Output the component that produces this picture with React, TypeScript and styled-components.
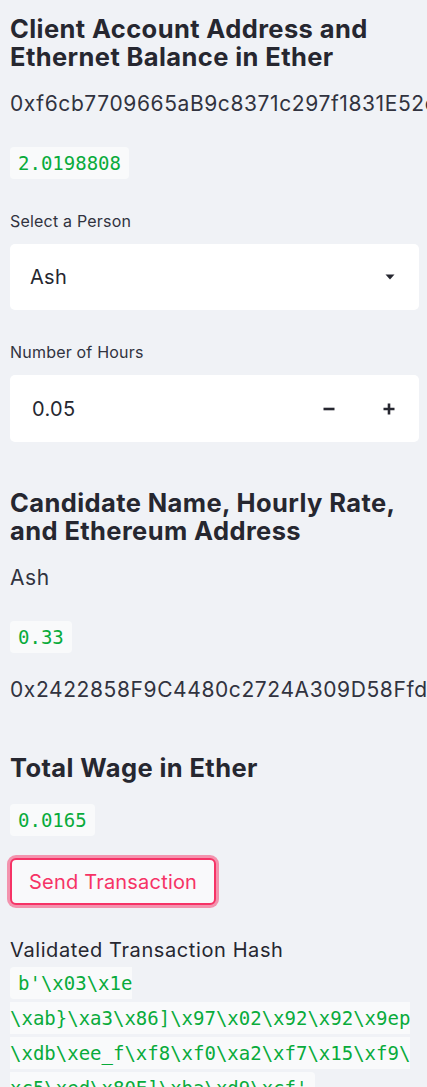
import React from 'react'
import styled, { createGlobalStyle } from 'styled-components'

const GlobalStyle = createGlobalStyle`
  html, body {
    margin: 0;
    padding: 0;
    background: #f0f2f6;
    overflow-x: hidden;
  }
  body {
    font-family: Inter, "Noto Sans", sans-serif;
    color: #262730;
  }
`

const hashLines = [
  "b'\\x03\\x1e",
  "\\xab}\\xa3\\x86]\\x97\\x02\\x92\\x92\\x9ep",
  "\\xdb\\xee_f\\xf8\\xf0\\xa2\\xf7\\x15\\xf9\\",
  "xc5\\xed\\x80E]\\xba\\xd9\\xcf'",
]

const App = () => {
  return (
    <>
      <GlobalStyle />
      <Main>
        <Heading top={15}>Client Account Address and Ethernet Balance in Ether</Heading>
        <Text top={18}>0xf6cb7709665aB9c8371c297f1831E52c44c0a5F1</Text>
        <CodeRow top={28}>
          <Code>2.0198808</Code>
        </CodeRow>

        <Label top={32}>Select a Person</Label>
        <SelectBox>
          <FieldValue>Ash</FieldValue>
          <svg width="10" height="6" viewBox="0 0 10 6">
            <path d="M0.5 0.5 L9.5 0.5 L5 5.5 Z" fill="#262730" />
          </svg>
        </SelectBox>

        <Label top={32}>Number of Hours</Label>
        <NumberBox>
          <FieldValue>0.05</FieldValue>
          <StepButton aria-label="decrement">
            <svg width="12" height="12" viewBox="0 0 12 12">
              <path d="M0.5 6 H11.5" stroke="#262730" strokeWidth="2.6" />
            </svg>
          </StepButton>
          <StepButton aria-label="increment">
            <svg width="12" height="12" viewBox="0 0 12 12">
              <path d="M0.5 6 H11.5 M6 0.5 V11.5" stroke="#262730" strokeWidth="2.6" />
            </svg>
          </StepButton>
        </NumberBox>

        <Heading top={47}>Candidate Name, Hourly Rate, and Ethereum Address</Heading>
        <Text top={18}>Ash</Text>
        <CodeRow top={28}>
          <Code>0.33</Code>
        </CodeRow>
        <Text top={22}>0x2422858F9C4480c2724A309D58Ffd7A10E2b1c3f</Text>

        <Heading top={49}>Total Wage in Ether</Heading>
        <CodeRow top={22}>
          <Code>0.0165</Code>
        </CodeRow>

        <SendButton>Send Transaction</SendButton>

        <HashLabel>Validated Transaction Hash</HashLabel>
        <HashBlock>
          <HashCode>
            {hashLines.map((line, i) => (
              <React.Fragment key={i}>
                {line}
                {i < hashLines.length - 1 && <br />}
              </React.Fragment>
            ))}
          </HashCode>
        </HashBlock>
      </Main>
    </>
  )
}

interface SpacingProps {
  top: number
}

const Main = styled.main`
  box-sizing: border-box;
  width: 427px;
  padding: 0 8px 40px 10px;
  display: flex;
  flex-direction: column;
`
const Heading = styled.h3<SpacingProps>`
  margin: ${props => props.top}px 0 0 0;
  font-size: 25.5px;
  line-height: 28px;
  font-weight: 700;
  letter-spacing: 0.4px;
  color: #262730;
`
const Text = styled.p<SpacingProps>`
  margin: ${props => props.top}px 0 0 0;
  font-size: 21px;
  line-height: 30px;
  letter-spacing: 0.6px;
  white-space: nowrap;
  color: #31333f;
`
const CodeRow = styled.div<SpacingProps>`
  margin-top: ${props => props.top}px;
  display: flex;
`
const Code = styled.code`
  box-sizing: border-box;
  height: 32px;
  padding: 4px 8px;
  border-radius: 4px;
  background: #f9fafb;
  color: #09ab3b;
  font-family: "DejaVu Sans Mono", "Liberation Mono", monospace;
  font-size: 19px;
  line-height: 24px;
`
const Label = styled.label<SpacingProps>`
  display: block;
  margin: ${props => props.top}px 0 13px 0;
  font-size: 16px;
  line-height: 20px;
  letter-spacing: 0.2px;
  color: #31333f;
`
const SelectBox = styled.div`
  box-sizing: border-box;
  height: 66px;
  background: #ffffff;
  border-radius: 5px;
  display: flex;
  align-items: center;
  justify-content: space-between;
  padding: 0 24px 0 20px;
`
const NumberBox = styled.div`
  box-sizing: border-box;
  height: 67px;
  background: #ffffff;
  border-radius: 5px;
  display: flex;
  align-items: center;
  padding-left: 22px;
`
const FieldValue = styled.span`
  flex: 1;
  font-size: 20px;
  line-height: 24px;
  letter-spacing: 0.3px;
  color: #262730;
`
const StepButton = styled.button`
  width: 60px;
  height: 100%;
  border: none;
  background: transparent;
  display: flex;
  align-items: center;
  justify-content: center;
  padding: 0;
`
const SendButton = styled.button`
  align-self: flex-start;
  box-sizing: border-box;
  margin-top: 22px;
  height: 47px;
  padding: 0 17px;
  background: #f9f9fb;
  border: 2px solid rgb(246, 51, 102);
  border-radius: 6px;
  box-shadow: 0 0 0 3px rgba(246, 51, 102, 0.5);
  color: rgb(246, 51, 102);
  font-family: Inter, "Noto Sans", sans-serif;
  font-size: 20px;
  letter-spacing: 0.2px;
`
const HashLabel = styled.div`
  margin-top: 33px;
  font-size: 20px;
  line-height: 25px;
  letter-spacing: 0.6px;
  color: #262730;
`
const HashBlock = styled.div`
  margin-top: 3px;
  font-size: 19px;
  line-height: 35px;
`
const HashCode = styled.code`
  padding: 5px 8px;
  border-radius: 4px;
  background: #f9fafb;
  color: #09ab3b;
  font-family: "DejaVu Sans Mono", "Liberation Mono", monospace;
  font-size: 19px;
`

export default App
